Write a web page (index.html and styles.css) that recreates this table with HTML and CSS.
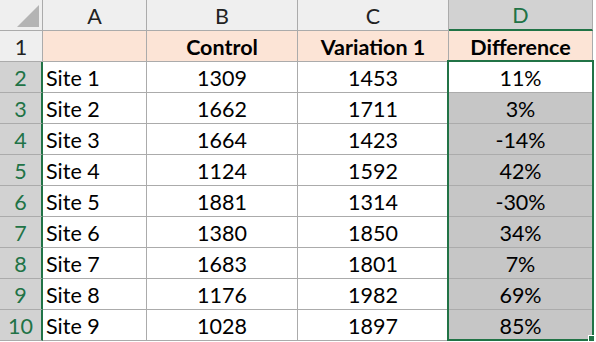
FILE: index.html
```html
<!DOCTYPE html>
<html>
<head>
<meta charset="utf-8">
<link rel="stylesheet" href="styles.css">
</head>
<body>
<div class="sheet">
  <div class="grid">
    <div class="hdr corner"><span class="tri"></span></div>
    <div class="hdr col">A</div>
    <div class="hdr col">B</div>
    <div class="hdr col">C</div>
    <div class="hdr col sel-col">D</div>

    <div class="hdr row">1</div>
    <div class="cell head"></div>
    <div class="cell head c">Control</div>
    <div class="cell head c">Variation 1</div>
    <div class="cell head c">Difference</div>

    <div class="hdr row sel-row">2</div>
    <div class="cell">Site 1</div>
    <div class="cell c">1309</div>
    <div class="cell c">1453</div>
    <div class="cell c active">11%</div>

    <div class="hdr row sel-row">3</div>
    <div class="cell">Site 2</div>
    <div class="cell c">1662</div>
    <div class="cell c">1711</div>
    <div class="cell c shade">3%</div>

    <div class="hdr row sel-row">4</div>
    <div class="cell">Site 3</div>
    <div class="cell c">1664</div>
    <div class="cell c">1423</div>
    <div class="cell c shade">-14%</div>

    <div class="hdr row sel-row">5</div>
    <div class="cell">Site 4</div>
    <div class="cell c">1124</div>
    <div class="cell c">1592</div>
    <div class="cell c shade">42%</div>

    <div class="hdr row sel-row">6</div>
    <div class="cell">Site 5</div>
    <div class="cell c">1881</div>
    <div class="cell c">1314</div>
    <div class="cell c shade">-30%</div>

    <div class="hdr row sel-row">7</div>
    <div class="cell">Site 6</div>
    <div class="cell c">1380</div>
    <div class="cell c">1850</div>
    <div class="cell c shade">34%</div>

    <div class="hdr row sel-row">8</div>
    <div class="cell">Site 7</div>
    <div class="cell c">1683</div>
    <div class="cell c">1801</div>
    <div class="cell c shade">7%</div>

    <div class="hdr row sel-row">9</div>
    <div class="cell">Site 8</div>
    <div class="cell c">1176</div>
    <div class="cell c">1982</div>
    <div class="cell c shade">69%</div>

    <div class="hdr row sel-row">10</div>
    <div class="cell">Site 9</div>
    <div class="cell c">1028</div>
    <div class="cell c">1897</div>
    <div class="cell c shade">85%</div>
  </div>
  <div class="selection"><span class="handle"></span></div>
</div>
</body>
</html>
```

FILE: styles.css
```css
html, body {
  margin: 0;
  padding: 0;
  background: #ffffff;
}
.sheet {
  position: relative;
  width: 596px;
  height: 342px;
  overflow: hidden;
  font-family: Lato, "Open Sans", sans-serif;
  font-size: 21.5px;
  color: #000;
}
.grid {
  display: grid;
  grid-template-columns: 43px 104px 151px 151px 144px;
  grid-auto-rows: 31px;
}
.grid > div {
  box-sizing: border-box;
  border-right: 1px solid #ababab;
  border-bottom: 1px solid #ababab;
  display: flex;
  align-items: center;
  white-space: nowrap;
}
.hdr {
  background: #efefef;
  color: #222;
  justify-content: center;
}
.corner {
  position: relative;
}
.tri {
  position: absolute;
  left: 17px;
  top: 5px;
  width: 22px;
  height: 22px;
  background: #b4b4b4;
  clip-path: polygon(100% 0, 100% 100%, 0 100%);
}
.col {
  padding-top: 1px;
}
.sel-col {
  background: #d2d2d2;
  color: #217346;
  border-bottom: 2px solid #217346 !important;
}
.row {
  padding-top: 1px;
}
.sel-row {
  background: #d2d2d2;
  color: #217346;
  border-right: 2px solid #217346 !important;
}
.cell {
  padding-left: 3px;
  padding-top: 1px;
}
.cell.c {
  justify-content: center;
  padding-left: 0;
}
.head {
  background: #fce4d6;
  font-weight: 700;
}
.shade {
  background: #c6c6c6;
}
.active {
  background: #ffffff;
}
.selection {
  position: absolute;
  left: 447px;
  top: 60px;
  width: 147px;
  height: 281px;
  box-sizing: border-box;
  border: 2px solid #217346;
  pointer-events: none;
}
.handle {
  position: absolute;
  right: -3px;
  bottom: -3px;
  width: 5px;
  height: 5px;
  background: #217346;
  border: 1px solid #ffffff;
}
```
